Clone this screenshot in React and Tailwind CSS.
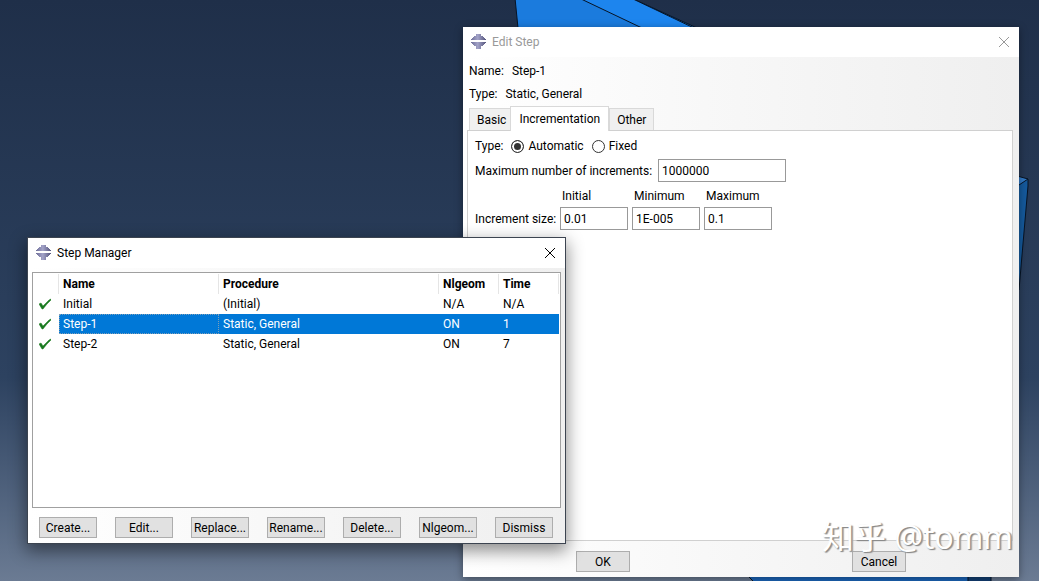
import React, { useState } from 'react';
import clsx from 'clsx';

const steps = [
  { name: 'Initial', procedure: '(Initial)', nlgeom: 'N/A', time: 'N/A' },
  { name: 'Step-1', procedure: 'Static, General', nlgeom: 'ON', time: '1' },
  { name: 'Step-2', procedure: 'Static, General', nlgeom: 'ON', time: '7' },
];

const managerActions = ['Create...', 'Edit...', 'Replace...', 'Rename...', 'Delete...', 'Nlgeom...', 'Dismiss'];
const tabs = ['Basic', 'Incrementation', 'Other'];

const AppIcon = () => (
  <svg className="h-[15px] w-[15px] shrink-0" viewBox="0 0 15 15" aria-hidden="true">
    <defs>
      <linearGradient id="app-icon" x1="0" x2="1" y1="0" y2="0">
        <stop offset="0" stopColor="#6e6e98" />
        <stop offset="0.45" stopColor="#a3a3c8" />
        <stop offset="1" stopColor="#54547c" />
      </linearGradient>
    </defs>
    <path fill="url(#app-icon)" d="M5 0h5v2h2v1h1v1h1v1h1v1H0V5h1V4h1V3h1V2h2z" />
    <path fill="url(#app-icon)" d="M0 8h15v1h-1v1h-1v1h-1v1h-2v3H5v-3H3v-1H2v-1H1V9H0z" />
  </svg>
);

const CloseButton = () => (
  <button type="button" aria-label="Close" className="flex h-5 w-5 items-center justify-center">
    <svg className="h-3 w-3" viewBox="0 0 12 12" fill="none" stroke="currentColor">
      <path d="M1 1l10 10M11 1L1 11" />
    </svg>
  </button>
);

const CheckMark = () => (
  <svg className="mx-auto h-3 w-3" viewBox="0 0 12 12" aria-hidden="true">
    <path fill="#1a7a1f" stroke="#1a7a1f" strokeWidth="0.5" d="M0 6l2-1 2 3 6-6 2-1v1L8 6l-4 5H3z" />
  </svg>
);

const DialogButton = ({ className, children }) => (
  <button
    type="button"
    className={clsx('h-[21px] whitespace-nowrap border border-[#adadad] bg-[#e1e1e1] pt-px text-center leading-[18px]', className)}
  >
    {children}
  </button>
);

const Radio = ({ label, checked, onChange }) => (
  <label className="flex items-center gap-1">
    <input
      type="radio"
      name="increment-type"
      checked={checked}
      onChange={onChange}
      className="h-[13px] w-[13px] appearance-none rounded-full border border-[#333] bg-white checked:bg-[#333] checked:shadow-[inset_0_0_0_2px_white]"
    />
    {label}
  </label>
);

const Field = ({ className, ...props }) => (
  <input type="text" className={clsx('h-[23px] border border-[#999] bg-white px-[3px]', className)} {...props} />
);

// Part of the model that stays visible behind the dialogs
const Viewport = () => (
  <svg className="absolute left-0 top-0 h-[581px] w-[1039px]" viewBox="0 0 1039 581" stroke="#071425" aria-hidden="true">
    <path fill="#1b7bdd" d="M515-2l4 40h200L631-2z" />
    <path fill="#1d85ee" d="M579-2l84 40h52L631-2z" />
    <path fill="#15599c" d="M1000 178l28 1v7l-9 104h-19z" />
    <path fill="#3279c4" d="M1010 174l18 5-9 6-9 4z" />
    <path fill="#1b66bb" d="M742 570l14 14h213v-14z" />
    <path fill="#123f74" d="M968 570v14h23v-14z" />
  </svg>
);

const EditStep = () => {
  const [tab, setTab] = useState('Incrementation');
  const [type, setType] = useState('Automatic');

  return (
    <section className="absolute bottom-1 left-[463px] right-5 top-[27px] flex flex-col bg-white shadow-[0_2px_8px_rgba(0,0,0,0.4)]">
      <header className="flex h-[30px] shrink-0 items-center gap-1.5 pb-px pl-2 pr-[5px] text-[#999]">
        <AppIcon />
        <h2 className="flex-1">Edit Step</h2>
        <CloseButton />
      </header>

      <div className="flex flex-1 flex-col bg-linear-to-r from-white to-[#efefef] pl-1 pr-1.5">
        <dl className="px-0.5 pt-[3px] leading-[23px]">
          <div className="flex gap-2">
            <dt>Name:</dt>
            <dd>Step-1</dd>
          </div>
          <div className="flex gap-2">
            <dt>Type:</dt>
            <dd>Static, General</dd>
          </div>
        </dl>

        <div role="tablist" className="flex items-end pl-0.5">
          {tabs.map((name) => (
            <button
              key={name}
              type="button"
              role="tab"
              aria-selected={tab === name}
              onClick={() => setTab(name)}
              className={clsx(
                'border border-b-0 border-[#d9d9d9]',
                tab === name
                  ? 'relative -mb-px h-[25px] bg-white px-2 not-first:-ml-1'
                  : 'h-[22px] bg-[#f0f0f0] px-[7px] pt-px'
              )}
            >
              {name}
            </button>
          ))}
        </div>

        <div className="flex-1 border border-[#d0d0d0] bg-white px-[7px] pt-1.5">
          <div className="flex h-[18px] items-center gap-2">
            <span>Type:</span>
            <Radio label="Automatic" checked={type === 'Automatic'} onChange={() => setType('Automatic')} />
            <Radio label="Fixed" checked={type === 'Fixed'} onChange={() => setType('Fixed')} />
          </div>

          <div className="mt-1 flex items-center">
            <label htmlFor="max-increments" className="w-[183px] whitespace-nowrap">Maximum number of increments:</label>
            <Field id="max-increments" className="w-32" defaultValue="1000000" />
          </div>

          <div className="mt-1 grid grid-cols-[81px_68px_68px_68px] items-center gap-x-1">
            <span />
            <label htmlFor="initial" className="pb-px pl-0.5 leading-5">Initial</label>
            <label htmlFor="minimum" className="pb-px pl-0.5 leading-5">Minimum</label>
            <label htmlFor="maximum" className="pb-px pl-0.5 leading-5">Maximum</label>
            <span className="whitespace-nowrap">Increment size:</span>
            <Field id="initial" defaultValue="0.01" />
            <Field id="minimum" defaultValue="1E-005" />
            <Field id="maximum" defaultValue="0.1" />
          </div>
        </div>

        <footer className="flex h-9 shrink-0 items-center justify-between pl-[109px] pr-[107px] pt-1">
          <DialogButton className="w-[54px]">OK</DialogButton>
          <DialogButton className="w-[54px]">Cancel</DialogButton>
        </footer>
      </div>
    </section>
  );
};

const StepManager = () => {
  const [selected, setSelected] = useState('Step-1');

  return (
    <section className="absolute left-7 top-[238px] flex h-[305px] w-[537px] flex-col bg-white shadow-[0_0_0_1px_#3c4450,0_6px_16px_2px_rgba(0,0,0,0.45)]">
      <header className="flex h-[30px] shrink-0 items-center gap-1.5 pb-px pl-2 pr-[5px]">
        <AppIcon />
        <h2 className="flex-1">Step Manager</h2>
        <CloseButton />
      </header>

      <div className="flex flex-1 flex-col bg-linear-to-r from-white to-[#efefef] px-1 pt-1">
        <div className="flex-1 border border-[#a0a0a0] bg-white py-px pr-px">
          <table className="w-full table-fixed border-separate border-spacing-0 text-left">
            <colgroup>
              <col className="w-[26px]" />
              <col className="w-40" />
              <col className="w-[220px]" />
              <col className="w-[60px]" />
              <col />
            </colgroup>
            <thead>
              <tr className="h-5 *:border-r *:border-[#e5e5e5]">
                <th aria-label="Status" />
                <th className="pl-1">Name</th>
                <th className="pl-1">Procedure</th>
                <th className="pl-1">Nlgeom</th>
                <th className="pl-1">Time</th>
              </tr>
            </thead>
            <tbody>
              {steps.map((step) => (
                <tr
                  key={step.name}
                  onClick={() => setSelected(step.name)}
                  className={clsx('h-5 *:py-0', selected === step.name && 'text-white')}
                >
                  <td className="pl-0 pr-0.5"><CheckMark /></td>
                  <td
                    className={clsx(
                      'px-1',
                      selected === step.name && 'bg-[#0078d7] outline-1 -outline-offset-1 outline-dotted outline-[#7f9fb8]'
                    )}
                  >
                    {step.name}
                  </td>
                  {[step.procedure, step.nlgeom, step.time].map((value, i) => (
                    <td key={i} className={clsx('px-1', selected === step.name && 'bg-[#0078d7]')}>{value}</td>
                  ))}
                </tr>
              ))}
            </tbody>
          </table>
        </div>

        <footer className="flex h-[35px] shrink-0 items-center justify-between pl-[7px] pr-2 pt-1">
          {managerActions.map((action) => (
            <DialogButton key={action} className="w-[58px]">{action}</DialogButton>
          ))}
        </footer>
      </div>
    </section>
  );
};

const App = () => (
  <main className="relative h-screen overflow-hidden bg-linear-to-b from-[#1f2f49] from-0% via-[#2d4260] via-65% to-[#6b7b93] to-100% font-[Roboto,'Open_Sans',sans-serif] text-xs text-black">
    <Viewport />
    <EditStep />
    <StepManager />
    <p className="pointer-events-none absolute bottom-7 right-[26px] font-['Open_Sans','Noto_Sans_CJK_SC',sans-serif] text-[32px] leading-8 text-white [text-shadow:1px_1px_1px_#888,2px_1px_1px_#aaa]">
      知乎 @tomm
    </p>
  </main>
);

export default App;
